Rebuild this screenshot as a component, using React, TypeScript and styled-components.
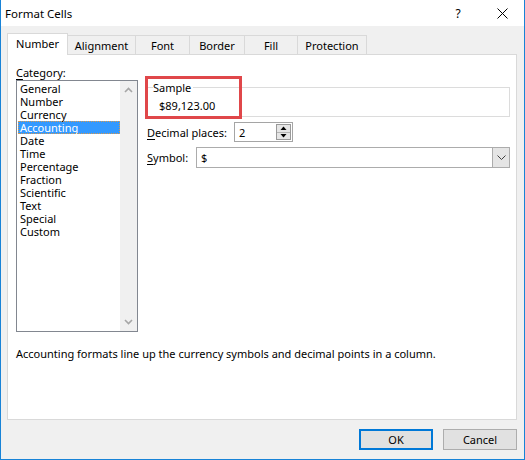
import React from 'react'
import styled, { createGlobalStyle } from 'styled-components'

const GlobalStyle = createGlobalStyle`
  html, body {
    margin: 0;
    padding: 0;
    background: #ffffff;
  }
  body {
    font-family: 'Noto Sans', 'Open Sans', sans-serif;
    font-size: 11px;
    color: #000000;
  }
  * {
    box-sizing: border-box;
  }
`

const categories = [
  'General',
  'Number',
  'Currency',
  'Accounting',
  'Date',
  'Time',
  'Percentage',
  'Fraction',
  'Scientific',
  'Text',
  'Special',
  'Custom',
]

const tabs = [
  { label: 'Number', width: 61 },
  { label: 'Alignment', width: 68 },
  { label: 'Font', width: 54 },
  { label: 'Border', width: 55 },
  { label: 'Fill', width: 53 },
  { label: 'Protection', width: 69 },
]

const Window = styled.div`
  width: 525px;
  height: 460px;
  display: flex;
  flex-direction: column;
  background: #f0f0f0;
  border: 1px solid #1883d7;
  border-top: none;
`

const TitleBar = styled.div`
  height: 26px;
  flex: none;
  display: flex;
  align-items: center;
  background: #ffffff;
  padding-left: 4px;
`

const Title = styled.div`
  flex: 1;
  font-size: 11.5px;
  line-height: 15px;
`

const TitleButton = styled.div`
  width: 44px;
  height: 26px;
  display: flex;
  align-items: center;
  justify-content: center;
  font-size: 12px;
`

const Body = styled.div`
  flex: 1;
  display: flex;
  flex-direction: column;
  padding: 7px 7px 0 6px;
  min-height: 0;
`

const TabRow = styled.div`
  display: flex;
  align-items: flex-end;
  height: 21px;
  flex: none;
`

const Tab = styled.div<{ $active?: boolean; $width: number }>`
  width: ${(p) => p.$width}px;
  display: flex;
  justify-content: center;
  align-items: center;
  border: 1px solid #d9d9d9;
  border-bottom: none;
  line-height: 15px;
  ${(p) =>
    p.$active
      ? `
    height: 22px;
    margin-bottom: -1px;
    background: #ffffff;
    position: relative;
    z-index: 1;
    padding-bottom: 2px;
  `
      : `
    height: 19px;
    border-left: none;
    background: #f0f0f0;
  `}
`

const Panel = styled.div`
  flex: 1;
  display: flex;
  flex-direction: column;
  background: #ffffff;
  border: 1px solid #d9d9d9;
  padding: 10px 6px 0 8px;
`

const Content = styled.div`
  display: grid;
  grid-template-columns: 122px 1fr;
  column-gap: 9px;
`

const FieldLabel = styled.div`
  line-height: 15px;
  white-space: nowrap;
  u {
    text-decoration: underline;
    text-underline-offset: 2px;
  }
`

const ListBox = styled.div`
  grid-column: 1;
  height: 252px;
  border: 1px solid #828790;
  display: flex;
  background: #ffffff;
`

const ListItems = styled.div`
  flex: 1;
  padding: 1px 0 0 1px;
`

const ListItem = styled.div<{ $selected?: boolean }>`
  height: 13px;
  line-height: 13px;
  padding-left: 2px;
  white-space: nowrap;
  background: ${(p) => (p.$selected ? '#3399ff' : 'transparent')};
  color: ${(p) => (p.$selected ? '#ffffff' : '#000000')};
  outline: ${(p) => (p.$selected ? '1px dotted #d99a4e' : 'none')};
  outline-offset: -1px;
`

const ScrollTrack = styled.div`
  width: 17px;
  background: #f0f0f0;
  display: flex;
  flex-direction: column;
  justify-content: space-between;
  align-items: center;
  padding: 6px 0;
`

const RightColumn = styled.div`
  grid-column: 2;
  grid-row: 2;
  display: flex;
  flex-direction: column;
`

const SampleWrap = styled.div`
  position: relative;
`

const GroupBox = styled.fieldset`
  margin: 0;
  padding: 0 5px 3px;
  border: 1px solid #dcdcdc;
  min-width: 0;
`

const Legend = styled.legend`
  padding: 0 2px 0 0;
  line-height: 15px;
`

const SampleValue = styled.div`
  margin-top: 3px;
  padding-left: 6px;
  line-height: 15px;
`

const Highlight = styled.div`
  position: absolute;
  left: -2px;
  top: -4px;
  width: 97px;
  height: 43px;
  border: 3px solid #e0474a;
  pointer-events: none;
`

const FormRow = styled.div`
  display: flex;
  align-items: center;
  margin-top: 5px;
`

const RowLabel = styled(FieldLabel)<{ $width: number }>`
  width: ${(p) => p.$width}px;
  flex: none;
`

const SpinBox = styled.div`
  width: 59px;
  height: 20px;
  border: 1px solid #a5a5a5;
  display: flex;
  align-items: center;
  padding: 1px;
`

const SpinValue = styled.div`
  flex: 1;
  padding-left: 3px;
  line-height: 15px;
`

const SpinButtons = styled.div`
  width: 15px;
  height: 100%;
  display: flex;
  flex-direction: column;
  border: 1px solid #9a9a9a;
`

const SpinButton = styled.div<{ $top?: boolean }>`
  flex: 1;
  display: flex;
  align-items: center;
  justify-content: center;
  background: #e6e6e6;
  border-top: ${(p) => (p.$top ? 'none' : '1px solid #b5b5b5')};
`

const Select = styled.div`
  flex: 1;
  height: 21px;
  border: 1px solid #acacac;
  display: flex;
  align-items: stretch;
`

const SelectValue = styled.div`
  flex: 1;
  padding-left: 4px;
  line-height: 19px;
`

const DropButton = styled.div`
  width: 17px;
  background: #e5e5e5;
  border-left: 1px solid #acacac;
  display: flex;
  align-items: center;
  justify-content: center;
`

const Description = styled.div`
  margin-top: 14px;
  line-height: 15px;
  white-space: nowrap;
`

const Footer = styled.div`
  flex: none;
  display: flex;
  justify-content: flex-end;
  gap: 10px;
  padding: 9px 0 9px 0;
`

const Button = styled.button<{ $primary?: boolean }>`
  width: 74px;
  height: 21px;
  font: inherit;
  color: #000000;
  background: #e1e1e1;
  border: ${(p) => (p.$primary ? '2px solid #0078d7' : '1px solid #adadad')};
  padding: 0;
  line-height: 15px;
`

const Chevron = ({ up }: { up?: boolean }) => (
  <svg width="9" height="6" viewBox="0 0 9 6">
    <path
      d={up ? 'M1 5 L4.5 1.5 L8 5' : 'M1 1 L4.5 4.5 L8 1'}
      fill="none"
      stroke="#a6a6a6"
      strokeWidth="1.6"
    />
  </svg>
)

const Triangle = ({ up }: { up?: boolean }) => (
  <svg width="7" height="4" viewBox="0 0 7 4">
    <path d={up ? 'M0.5 4 L3.5 0.5 L6.5 4 Z' : 'M0.5 0 L3.5 3.5 L6.5 0 Z'} fill="#000000" />
  </svg>
)

const App: React.FC = () => (
  <>
    <GlobalStyle />
    <Window>
      <TitleBar>
        <Title>Format Cells</Title>
        <TitleButton>?</TitleButton>
        <TitleButton>
          <svg width="11" height="11" viewBox="0 0 11 11">
            <path d="M0.5 0.5 L10.5 10.5 M10.5 0.5 L0.5 10.5" stroke="#000000" strokeWidth="1" />
          </svg>
        </TitleButton>
      </TitleBar>
      <Body>
        <TabRow>
          {tabs.map((t, i) => (
            <Tab key={t.label} $active={i === 0} $width={t.width}>
              {t.label}
            </Tab>
          ))}
        </TabRow>
        <Panel>
          <Content>
            <FieldLabel>
              <u>C</u>ategory:
            </FieldLabel>
            <div />
            <ListBox>
              <ListItems>
                {categories.map((c) => (
                  <ListItem key={c} $selected={c === 'Accounting'}>
                    {c}
                  </ListItem>
                ))}
              </ListItems>
              <ScrollTrack>
                <Chevron up />
                <Chevron />
              </ScrollTrack>
            </ListBox>
            <RightColumn>
              <SampleWrap>
                <GroupBox>
                  <Legend>Sample</Legend>
                  <SampleValue>$89,123.00</SampleValue>
                </GroupBox>
                <Highlight />
              </SampleWrap>
              <FormRow>
                <RowLabel $width={87}>
                  <u>D</u>ecimal places:
                </RowLabel>
                <SpinBox>
                  <SpinValue>2</SpinValue>
                  <SpinButtons>
                    <SpinButton $top>
                      <Triangle up />
                    </SpinButton>
                    <SpinButton>
                      <Triangle />
                    </SpinButton>
                  </SpinButtons>
                </SpinBox>
              </FormRow>
              <FormRow>
                <RowLabel $width={49}>
                  <u>S</u>ymbol:
                </RowLabel>
                <Select>
                  <SelectValue>$</SelectValue>
                  <DropButton>
                    <svg width="9" height="5" viewBox="0 0 9 5">
                      <path d="M0.5 0.5 L4.5 4.5 L8.5 0.5" fill="none" stroke="#404040" strokeWidth="1" />
                    </svg>
                  </DropButton>
                </Select>
              </FormRow>
            </RightColumn>
          </Content>
          <Description>
            Accounting formats line up the currency symbols and decimal points in a column.
          </Description>
        </Panel>
        <Footer>
          <Button $primary>OK</Button>
          <Button>Cancel</Button>
        </Footer>
      </Body>
    </Window>
  </>
)

export default App
